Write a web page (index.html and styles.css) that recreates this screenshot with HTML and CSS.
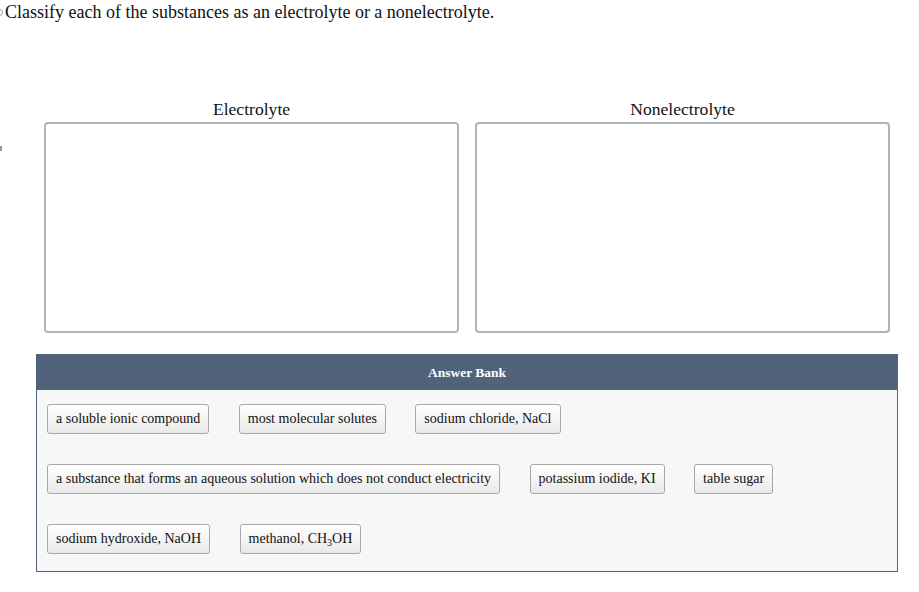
FILE: index.html
```html
<!DOCTYPE html>
<html>
<head>
<meta charset="utf-8">
<link rel="stylesheet" href="styles.css">
</head>
<body>
<div class="edge-dot"></div>
<div class="edge-mark"></div>
<p class="prompt">Classify each of the substances as an electrolyte or a nonelectrolyte.</p>
<div class="targets">
  <div class="target">
    <div class="target-label">Electrolyte</div>
    <div class="drop"></div>
  </div>
  <div class="target">
    <div class="target-label">Nonelectrolyte</div>
    <div class="drop"></div>
  </div>
</div>
<div class="bank">
  <div class="bank-head">Answer Bank</div>
  <div class="bank-body">
    <div class="row">
      <span class="chip">a soluble ionic compound</span>
      <span class="chip">most molecular solutes</span>
      <span class="chip">sodium chloride, NaCl</span>
    </div>
    <div class="row">
      <span class="chip">a substance that forms an aqueous solution which does not conduct electricity</span>
      <span class="chip">potassium iodide, KI</span>
      <span class="chip">table sugar</span>
    </div>
    <div class="row">
      <span class="chip">sodium hydroxide, NaOH</span>
      <span class="chip">methanol, CH<sub>3</sub>OH</span>
    </div>
  </div>
</div>
</body>
</html>
```
FILE: styles.css
```css
html, body {
  margin: 0;
  padding: 0;
  background: #fff;
  font-family: "Liberation Serif", "Times New Roman", serif;
  color: #222;
}
body {
  position: relative;
  width: 919px;
  height: 592px;
  overflow: hidden;
}
.edge-dot {
  position: absolute;
  left: -4px;
  top: 9px;
  width: 7px;
  height: 7px;
  border-radius: 50%;
  border: 1px solid #999;
  box-sizing: border-box;
}
.edge-mark {
  position: absolute;
  left: 0;
  top: 146px;
  width: 2px;
  height: 5px;
  background: #999;
}
.prompt {
  margin: 0;
  padding: 2px 0 0 5px;
  font-size: 18px;
  line-height: 20px;
  color: #111;
}
.targets {
  display: flex;
  gap: 16px;
  margin: 77px 0 0 44px;
  width: 846px;
}
.target {
  flex: 1;
  display: flex;
  flex-direction: column;
}
.target-label {
  text-align: center;
  font-size: 17.6px;
  line-height: 20px;
  height: 20px;
  margin-bottom: 3px;
  color: #111;
}
.drop {
  height: 211px;
  border: 2px solid #b3b3b3;
  border-radius: 4px;
  box-sizing: border-box;
  background: #fff;
}
.bank {
  margin: 21px 0 0 36px;
  width: 862px;
  border: 1px solid #50637a;
  box-sizing: border-box;
}
.bank-head {
  background: #50637a;
  color: #fff;
  font-weight: bold;
  font-size: 13.5px;
  height: 35px;
  line-height: 35px;
  text-align: center;
}
.bank-body {
  background: #f7f7f7;
  padding: 14px 10px 17px;
  display: flex;
  flex-direction: column;
  gap: 30px;
}
.row {
  display: flex;
  gap: 29.5px;
  align-items: flex-start;
}
.chip {
  display: inline-block;
  height: 30px;
  line-height: 27px;
  padding: 0 8px;
  font-size: 14px;
  color: #111;
  border: 1px solid #a8a8a8;
  border-radius: 3px;
  box-sizing: border-box;
  background: linear-gradient(#ffffff, #e9e9e9);
  white-space: nowrap;
}
.chip sub {
  font-size: 10px;
  line-height: 0;
  vertical-align: -3px;
}
```
